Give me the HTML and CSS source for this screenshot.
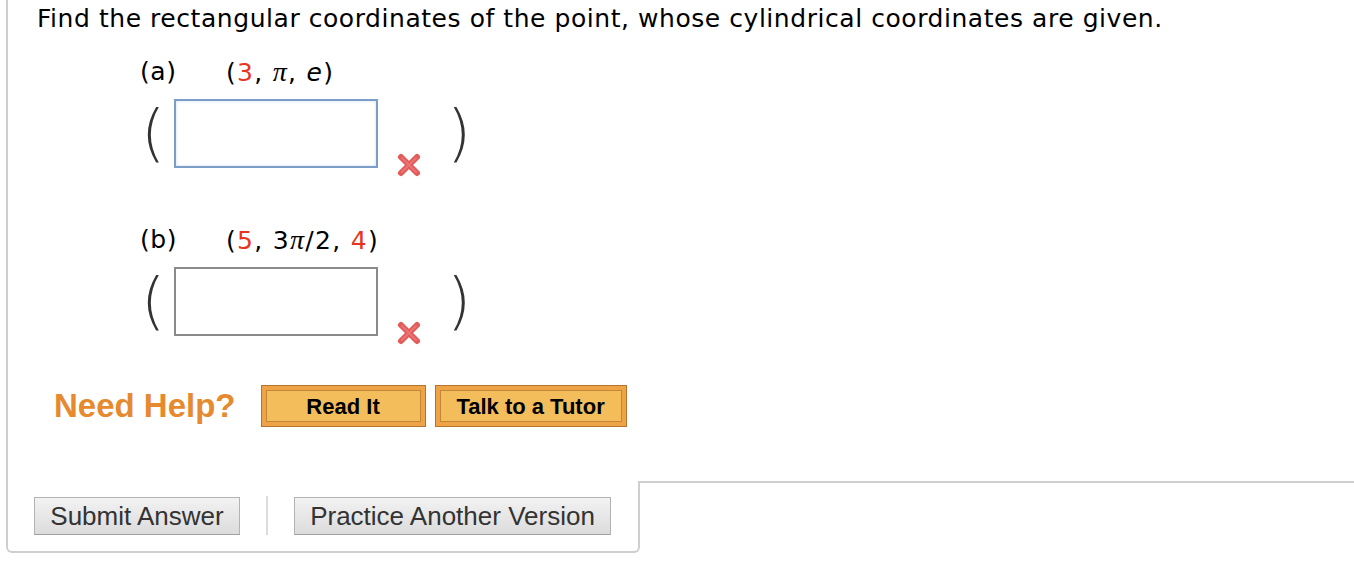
FILE: index.html
```
<!DOCTYPE html>
<html lang="en">

<head>
    <meta charset="UTF-8">
    <meta name="viewport" content="width=device-width, initial-scale=1.0">
    <title>Cylindrical coordinates</title>
    <link rel="stylesheet" href="styles.css">
</head>

<body>
    <div class="question">
        <div class="q_body">
            <p class="prompt">Find the rectangular coordinates of the point, whose cylindrical coordinates are given.</p>

            <!-- part a -->
            <div class="part">
                <div class="part_head">
                    <span class="part_label">(a)</span>
                    <span class="point">(<span class="red">3</span>, <i class="pi">π</i>, <i>e</i>)</span>
                </div>
                <div class="answer_row">
                    <span class="paren">(</span>
                    <span class="answer_box focus"></span>
                    <span class="wrong">
                        <svg width="26" height="26" viewBox="0 0 26 26">
                            <path d="M5 5 L21 21 M21 5 L5 21" stroke="#e25a5a" stroke-width="6" stroke-linecap="round" />
                            <path d="M6 6 L20 20 M20 6 L6 20" stroke="#ef8f8f" stroke-width="2" stroke-linecap="round" opacity="0.5" />
                        </svg>
                    </span>
                    <span class="paren">)</span>
                </div>
            </div>

            <!-- part b -->
            <div class="part">
                <div class="part_head">
                    <span class="part_label">(b)</span>
                    <span class="point">(<span class="red">5</span>, 3<i class="pi">π</i>/2, <span class="red">4</span>)</span>
                </div>
                <div class="answer_row">
                    <span class="paren">(</span>
                    <span class="answer_box"></span>
                    <span class="wrong">
                        <svg width="26" height="26" viewBox="0 0 26 26">
                            <path d="M5 5 L21 21 M21 5 L5 21" stroke="#e25a5a" stroke-width="6" stroke-linecap="round" />
                            <path d="M6 6 L20 20 M20 6 L6 20" stroke="#ef8f8f" stroke-width="2" stroke-linecap="round" opacity="0.5" />
                        </svg>
                    </span>
                    <span class="paren">)</span>
                </div>
            </div>

            <div class="help_row">
                <span class="need_help">Need Help?</span>
                <button class="help_btn read_it"><span>Read It</span></button>
                <button class="help_btn tutor"><span>Talk to a Tutor</span></button>
            </div>
        </div>

        <div class="q_foot">
            <div class="foot_tab">
                <button class="grey_btn submit">Submit Answer</button>
                <span class="sep"></span>
                <button class="grey_btn practice">Practice Another Version</button>
            </div>
            <div class="foot_rest"></div>
        </div>
    </div>
</body>

</html>
```

FILE: styles.css
```
* {
    margin: 0;
    padding: 0;
    box-sizing: border-box;
}

html,
body {
    width: 100%;
    background: #fff;
}

body {
    font-family: "DejaVu Sans", Verdana, sans-serif;
    color: #000;
}

.question {
    width: 100%;
    height: 570px;
}

.q_body {
    margin-left: 6px;
    border-left: 2px solid #cfcfcf;
    padding-left: 29px;
    padding-top: 4px;
    height: 481px;
}

.prompt {
    font-size: 25px;
    line-height: 30px;
    letter-spacing: 0.55px;
}

.part_head {
    display: flex;
    margin-left: 103px;
    margin-top: 23px;
    font-size: 25px;
    line-height: 30px;
    letter-spacing: 0.6px;
}

.part_label {
    width: 86px;
}

.point {
    letter-spacing: 1.3px;
}

.red {
    color: #e8351f;
}

.point i {
    font-style: oblique;
}

.point .pi {
    font-family: "Liberation Serif", serif;
    font-style: italic;
    font-size: 28px;
}

.answer_row {
    display: flex;
    align-items: flex-start;
    margin-left: 104px;
    margin-top: 11px;
    height: 69px;
}

.paren {
    width: 33px;
    height: 69px;
    font-size: 62px;
    font-weight: 200;
    line-height: 68px;
    color: #333;
}

.answer_box {
    width: 204px;
    height: 69px;
    border: 2px solid #8a8a8a;
    background: #fff;
}

.answer_box.focus {
    border-color: #7b9dc8;
    box-shadow: inset 0 0 3px #c9dcf3;
}

.wrong {
    width: 26px;
    height: 26px;
    margin-top: 53px;
    margin-left: 18px;
    margin-right: 25px;
}

.part + .part {
    margin-top: 57px;
}

.help_row {
    display: flex;
    align-items: center;
    margin-left: 17px;
    margin-top: 49px;
}

.need_help {
    font-family: "Liberation Sans", Arial, sans-serif;
    font-weight: bold;
    font-size: 33px;
    color: #e68a30;
    margin-right: 25px;
}

.help_btn {
    height: 42px;
    padding: 4px;
    border: 1px solid #b5752f;
    background: #eea346;
    font-family: "Liberation Sans", Arial, sans-serif;
    font-weight: bold;
    font-size: 22px;
    color: #000;
}

.help_btn span {
    display: block;
    height: 32px;
    line-height: 32px;
    border: 1px solid #c48636;
    background: #f4bd5b;
}

.read_it {
    width: 165px;
    margin-right: 9px;
}

.tutor {
    width: 192px;
}

.q_foot {
    display: flex;
    height: 72px;
}

.foot_tab {
    width: 634px;
    margin-left: 6px;
    border-left: 2px solid #cfcfcf;
    border-right: 2px solid #cfcfcf;
    border-bottom: 2px solid #cfcfcf;
    border-radius: 0 0 6px 6px;
    display: flex;
    align-items: flex-start;
    padding-left: 26px;
    padding-top: 16px;
}

.foot_rest {
    flex: 1;
    border-top: 2px solid #cfcfcf;
}

.grey_btn {
    height: 38px;
    border: 1px solid #b3b3b3;
    border-bottom-color: #a0a0a0;
    background: linear-gradient(#f2f2f2, #dcdcdc);
    font-family: "Liberation Sans", Arial, sans-serif;
    font-size: 26px;
    color: #333;
}

.submit {
    width: 206px;
}

.sep {
    width: 2px;
    height: 39px;
    margin: -1px 26px 0 26px;
    background: #dcdcdc;
}

.practice {
    width: 317px;
}
```
